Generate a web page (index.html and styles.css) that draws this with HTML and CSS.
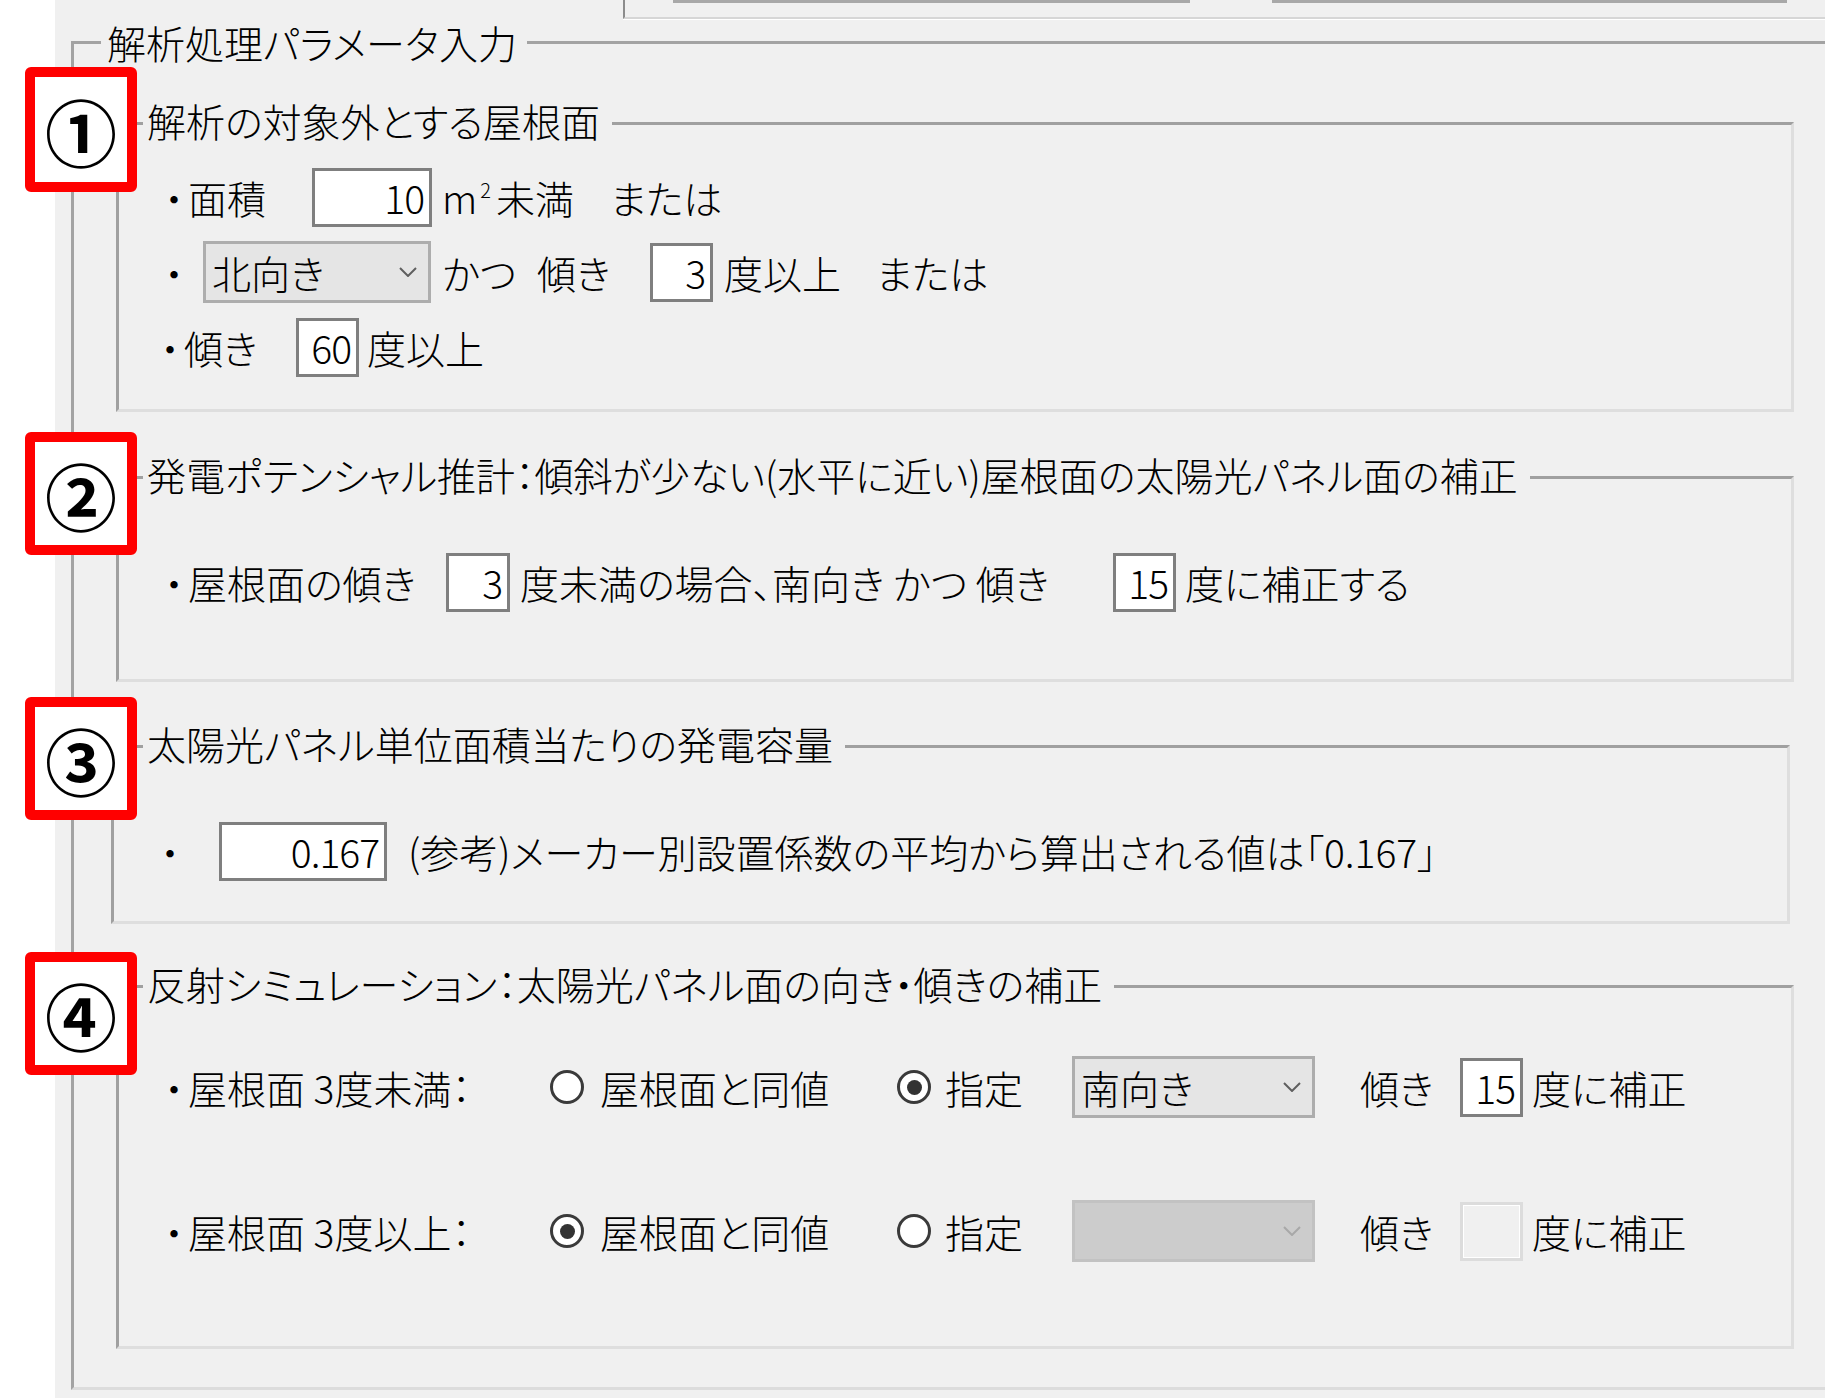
FILE: index.html
```html
<!DOCTYPE html>
<html lang="ja">
<head>
<meta charset="utf-8">
<title>解析処理パラメータ入力</title>
<link rel="stylesheet" href="styles.css">
</head>
<body>
<div class="page">
  <div class="strip"></div>
  <div class="main">
    <div class="topbar">
      <div class="prev"><span class="bar bar1"></span><span class="bar bar2"></span></div>
    </div>
    <fieldset class="outer">
      <legend class="outer-legend">解析処理パラメータ入力</legend>

      <fieldset class="group g1">
        <legend>解析の対象外とする屋根面</legend>
        <div class="row r1">
          <span class="bullet">・</span>
          <span class="lbl w-g1a">面積</span>
          <span class="tb w120 num">10</span>
          <span class="unit">m<span class="sup">2</span></span>
          <span class="lbl w-g1b">未満</span>
          <span class="lbl">または</span>
        </div>
        <div class="row r2">
          <span class="bullet">・</span>
          <span class="cb cb1">
            <span class="cb-text">北向き</span>
            <svg class="chev" width="18" height="10" viewBox="0 0 18 10"><polyline points="1,1 9,9 17,1" fill="none" stroke="#5f5f5f" stroke-width="2"/></svg>
          </span>
          <span class="lbl w-g1c">かつ</span>
          <span class="lbl w-g1d">傾き</span>
          <span class="tb w63 num">3</span>
          <span class="lbl w-g1e">度以上</span>
          <span class="lbl">または</span>
        </div>
        <div class="row r3">
          <span class="bullet">・</span>
          <span class="lbl w-g1f">傾き</span>
          <span class="tb w63 num">60</span>
          <span class="lbl m8">度以上</span>
        </div>
      </fieldset>

      <fieldset class="group g2">
        <legend>発電ポテンシャル推計：傾斜が少ない(水平に近い)屋根面の太陽光パネル面の補正</legend>
        <div class="row">
          <span class="bullet">・</span>
          <span class="lbl w-g2a">屋根面の傾き</span>
          <span class="tb w64 num">3</span>
          <span class="lbl w-g2b">度未満の場合、南向き かつ 傾き</span>
          <span class="tb w63 num">15</span>
          <span class="lbl m9">度に補正する</span>
        </div>
      </fieldset>

      <fieldset class="group g3">
        <legend>太陽光パネル単位面積当たりの発電容量</legend>
        <div class="row">
          <span class="bullet">・</span>
          <span class="tb w168 num m41">0.167</span>
          <span class="lbl m21">(参考)メーカー別設置係数の平均から算出される値は「0.167」</span>
        </div>
      </fieldset>

      <fieldset class="group g4">
        <legend>反射シミュレーション：太陽光パネル面の向き・傾きの補正</legend>
        <div class="row ra">
          <span class="bullet">・</span>
          <span class="lbl w-g4a">屋根面 3度未満：</span>
          <span class="radio"></span>
          <span class="lbl w-g4b">屋根面と同値</span>
          <span class="radio on"></span>
          <span class="lbl w-g4c">指定</span>
          <span class="cb cb4">
            <span class="cb-text">南向き</span>
            <svg class="chev" width="18" height="10" viewBox="0 0 18 10"><polyline points="1,1 9,9 17,1" fill="none" stroke="#5f5f5f" stroke-width="2"/></svg>
          </span>
          <span class="lbl w-g4d">傾き</span>
          <span class="tb w63 num">15</span>
          <span class="lbl m9">度に補正</span>
        </div>
        <div class="row rb">
          <span class="bullet">・</span>
          <span class="lbl w-g4a">屋根面 3度以上：</span>
          <span class="radio on"></span>
          <span class="lbl w-g4b">屋根面と同値</span>
          <span class="radio"></span>
          <span class="lbl w-g4c">指定</span>
          <span class="cb cb4 disabled">
            <span class="cb-text"></span>
            <svg class="chev" width="18" height="10" viewBox="0 0 18 10"><polyline points="1,1 9,9 17,1" fill="none" stroke="#a8a8a8" stroke-width="2"/></svg>
          </span>
          <span class="lbl w-g4d">傾き</span>
          <span class="tb w63 num tb-disabled"></span>
          <span class="lbl m9">度に補正</span>
        </div>
      </fieldset>
    </fieldset>
  </div>

  <div class="anno a1"><span class="circ">①</span></div>
  <div class="anno a2"><span class="circ">②</span></div>
  <div class="anno a3"><span class="circ">③</span></div>
  <div class="anno a4"><span class="circ">④</span></div>
</div>
</body>
</html>
```
FILE: styles.css
```css
* { box-sizing: border-box; }
html, body { margin: 0; padding: 0; }
body {
  width: 1825px;
  height: 1398px;
  overflow: hidden;
  background: #f0f0f0;
  color: #000;
  font-family: "Noto Sans CJK JP", "Noto Sans", sans-serif;
  font-size: 39px;
  font-weight: 300;
  font-feature-settings: "palt";
}
.page { position: relative; display: flex; height: 1398px; }
.strip { flex: none; width: 55px; background: #fff; }
.main { flex: 1; min-width: 0; }

/* remnant of the control block above */
.topbar { height: 20px; }
.prev {
  margin-left: 568px;
  margin-right: -20px;
  height: 19px;
  display: flex;
  align-items: flex-start;
  border-left: 2px solid #8c8c8c;
  border-bottom: 2px solid #d6d6d6;
  box-shadow: 0 1px 0 #fff;
}
.bar { height: 3px; background: #a8a8a8; }
.bar1 { margin-left: 48px; width: 517px; }
.bar2 { margin-left: 82px; width: 515px; }

/* group boxes */
fieldset { margin: 0; min-width: 0; }
.outer {
  margin-left: 16px;
  margin-right: -30px;
  padding: 0 0 38px 42px;
  border: 3px solid #a3a3a3;
  border-right-color: #dcdcdc;
  border-bottom-color: #dcdcdc;
}
.outer-legend {
  margin-left: -15px;
  padding: 0 10px 0 6px;
  line-height: 44px;
}
.group {
  width: 1678px;
  padding: 0;
  border: 3px solid #a0a0a0;
  border-right-color: #dedede;
  border-bottom-color: #dedede;
}
.group legend {
  margin-left: 24px;
  padding: 0 12px 6px 4px;
  line-height: 44px;
}
.g1 { margin-top: 34px; height: 314px; padding-top: 18px; }
.g2 { margin-top: 40px; height: 230px; padding-top: 49px; }
.g3 { margin-top: 39px; height: 203px; padding-top: 49px; margin-left: -5px; width: 1679px; }
.g3 legend { margin-left: 29px; }
.g4 { margin-top: 37px; height: 388px; padding-top: 45px; }

/* rows */
.row {
  display: flex;
  align-items: center;
  height: 62px;
  padding-left: 47px;
  white-space: nowrap;
}
.g1 .row + .row { margin-top: 13px; }
.g1 .r3 { padding-left: 43px; }
.g3 .row { padding-left: 48px; }
.g4 .rb { margin-top: 82px; }

.bullet {
  flex: none;
  width: 16px;
  display: flex;
  justify-content: center;
}
.lbl { flex: none; }
.row > .lbl:nth-child(2) { margin-left: 6px; }

.w-g1a { width: 124px; }
.w-g1b { width: 114px; }
.w-g1c { width: 95px; margin-left: 11px; }
.w-g1d { width: 113px; }
.w-g1e { width: 152px; margin-left: 11px; }
.w-g1f { width: 112px; }
.w-g2a { width: 258px; }
.w-g2b { width: 593px; margin-left: 10px; }
.w-g4a { width: 362px; }
.w-g4b { width: 297px; margin-left: 16px; }
.w-g4c { width: 127px; margin-left: 14px; }
.w-g4d { width: 100px; margin-left: 45px; }
.m8 { margin-left: 8px; }
.m9 { margin-left: 9px; }
.m21 { margin-left: 21px; }
.m41 { margin-left: 41px; }

.unit { flex: none; width: 54px; margin-left: 10px; }
.sup { font-size: 20px; vertical-align: 16px; margin-left: 3px; }

/* text boxes */
.tb {
  flex: none;
  height: 59px;
  background: #fff;
  border: 3px solid #7f7f7f;
  display: flex;
  align-items: center;
  justify-content: flex-end;
  padding-right: 5px;
  letter-spacing: -1px;
}
.w63 { width: 63px; }
.w64 { width: 64px; }
.w120 { width: 120px; }
.w168 { width: 168px; }
.tb-disabled { background: #f0f0f0; border-color: #dcdcdc; box-shadow: inset 0 0 0 1px #fff; }

/* combo boxes */
.cb {
  flex: none;
  position: relative;
  height: 62px;
  background: #e5e5e5;
  border: 3px solid #adadad;
  display: flex;
  align-items: center;
  padding-left: 6px;
}
.cb1 { width: 228px; margin-left: 21px; }
.cb4 { width: 243px; }
.cb .chev { position: absolute; right: 11px; top: 23px; }
.cb.disabled { background: #cccccc; border-color: #c2c2c2; }

/* radio buttons */
.radio {
  flex: none;
  width: 34px;
  height: 34px;
  border-radius: 50%;
  background: #fff;
  border: 3px solid #3a3a3a;
  display: flex;
  align-items: center;
  justify-content: center;
}
.radio.on::after {
  content: "";
  width: 15px;
  height: 15px;
  border-radius: 50%;
  background: #333;
}

/* red annotation boxes */
.anno {
  position: absolute;
  left: 25px;
  width: 112px;
  height: 123px;
  border: 10px solid #ff0000;
  border-radius: 6px;
  background: #fff;
  display: flex;
  align-items: center;
  justify-content: center;
}
.a1 { top: 67px; height: 125px; }
.a2 { top: 432px; }
.a3 { top: 697px; }
.a4 { top: 952px; }
.circ {
  font-size: 72px;
  font-weight: 700;
  line-height: 1;
  font-feature-settings: normal;
}
```
